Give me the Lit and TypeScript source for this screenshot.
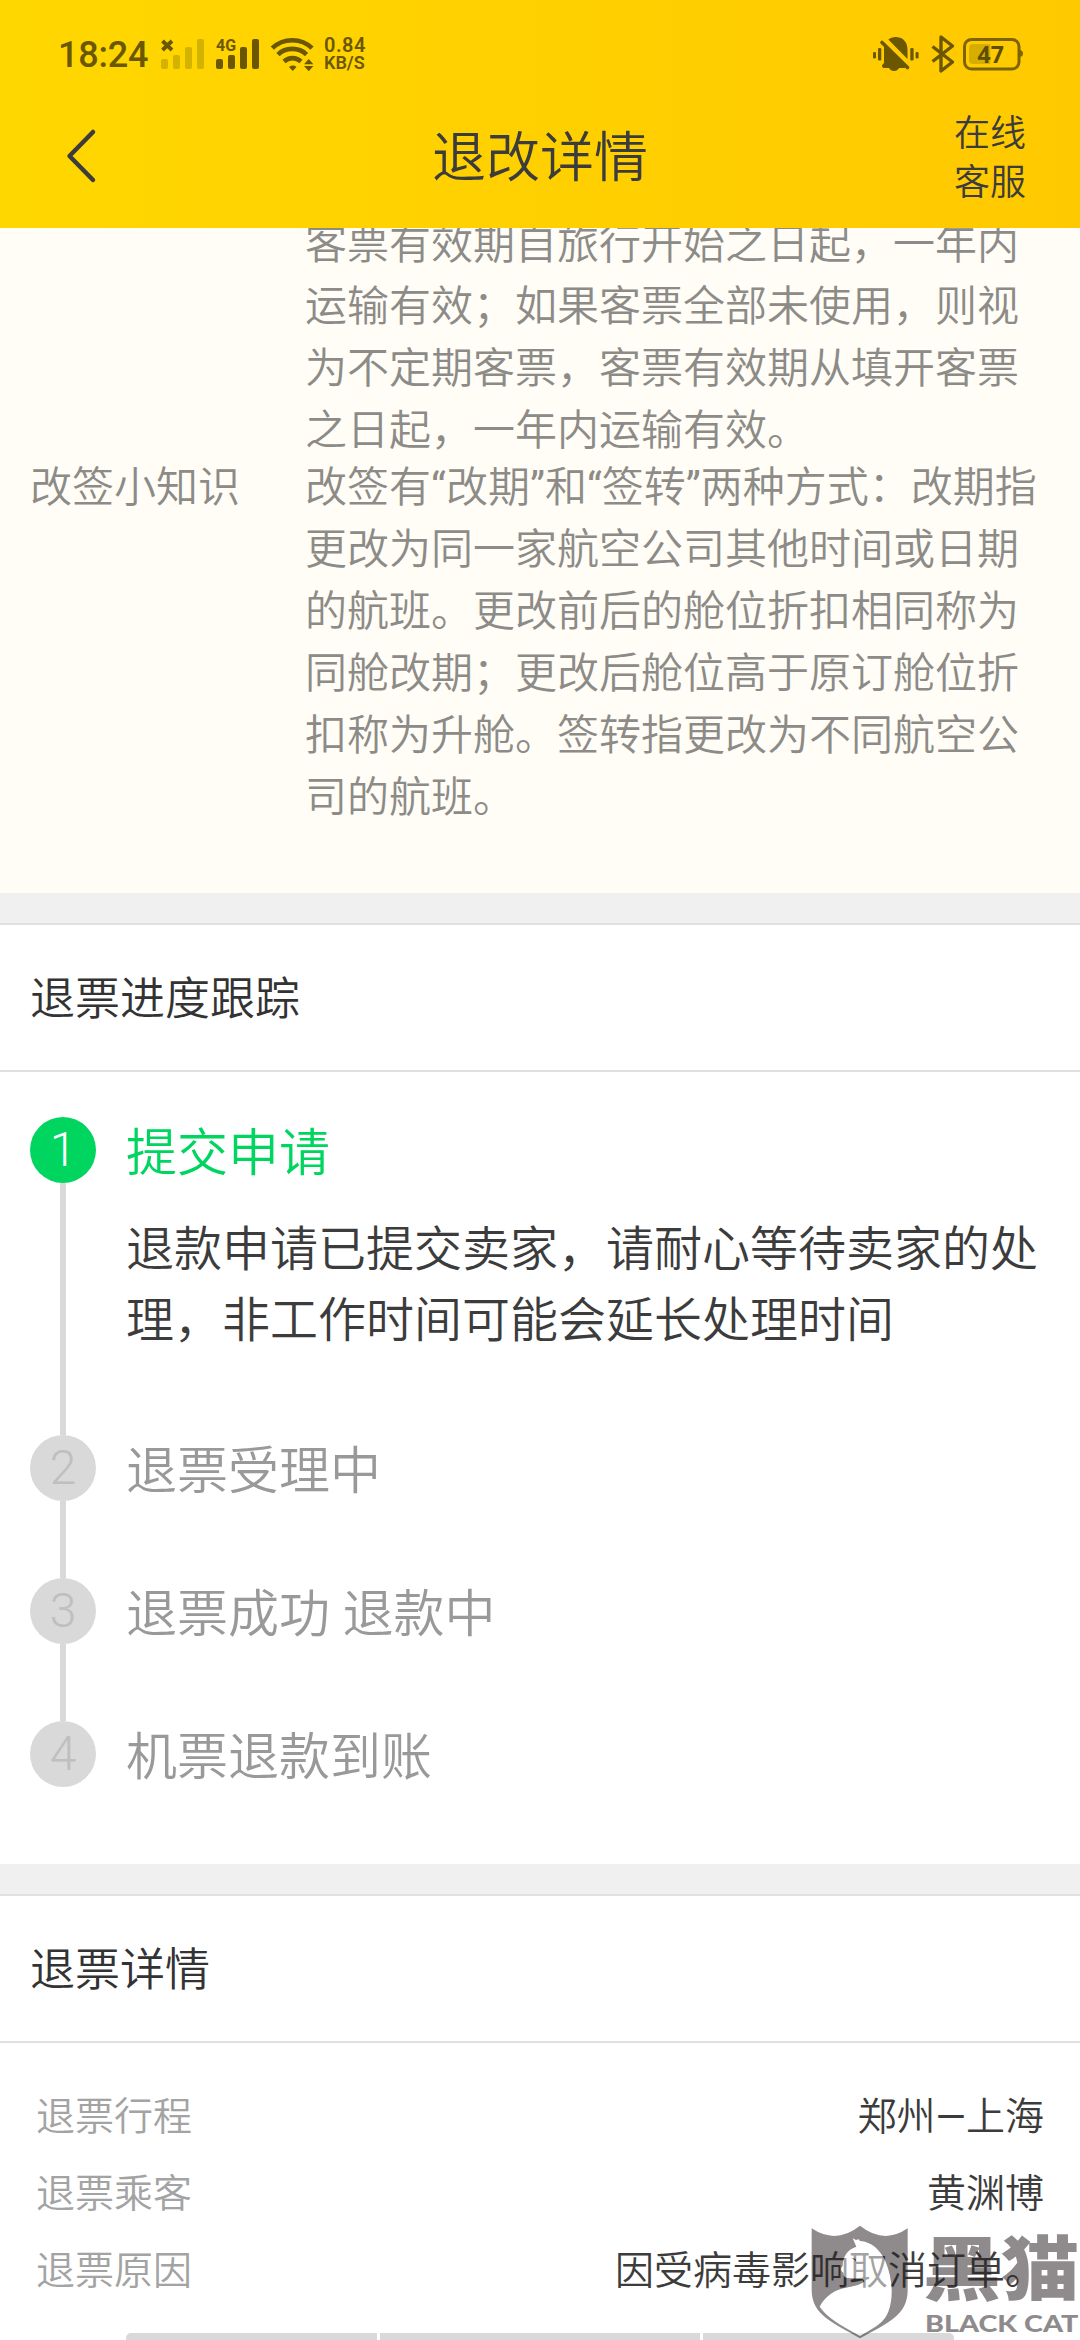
import { LitElement, html, css, nothing } from "lit";
import { customElement, property } from "lit/decorators.js";

const FONT = css`Roboto, "Noto Sans CJK SC", sans-serif`;

interface Step {
  title: string;
  note?: string;
  active?: boolean;
}

const RULES = [
  {
    label: "",
    text: "客票有效期自旅行开始之日起，一年内运输有效；如果客票全部未使用，则视为不定期客票，客票有效期从填开客票之日起，一年内运输有效。",
  },
  {
    label: "改签小知识",
    text: "改签有“改期”和“签转”两种方式：改期指更改为同一家航空公司其他时间或日期的航班。更改前后的舱位折扣相同称为同舱改期；更改后舱位高于原订舱位折扣称为升舱。签转指更改为不同航空公司的航班。",
  },
];

const STEPS: Step[] = [
  {
    title: "提交申请",
    note: "退款申请已提交卖家，请耐心等待卖家的处理，非工作时间可能会延长处理时间",
    active: true,
  },
  { title: "退票受理中" },
  { title: "退票成功 退款中" },
  { title: "机票退款到账" },
];

const DETAILS = [
  ["退票行程", "郑州—上海"],
  ["退票乘客", "黄渊博"],
  ["退票原因", "因受病毒影响取消订单。"],
];

/** Sets quotes and dashes in the regular Latin weight. */
const withLatinMarks = (text: string) =>
  text.split(/([“”—])/).map((part) => (/^[“”—]$/.test(part) ? html`<span class="latin">${part}</span>` : part));

@customElement("status-bar")
class StatusBar extends LitElement {
  static styles = css`
    :host {
      display: flex;
      justify-content: space-between;
      height: 78px;
      padding: 33px 57px 0 58px;
      box-sizing: border-box;
      color: #6b5700;
      font-family: ${FONT};
    }
    .group {
      display: flex;
      height: 42px;
    }
    .time {
      width: 102px;
      font-size: 36px;
      line-height: 45px;
      font-weight: 500;
      letter-spacing: -0.2px;
    }
    svg {
      display: block;
      flex: none;
    }
    .tag {
      font: 700 17px Roboto, sans-serif;
    }
    .rate {
      display: flex;
      flex-direction: column;
      margin-left: 10px;
      font-weight: 600;
      white-space: nowrap;
    }
    .speed {
      font-size: 20px;
      line-height: 25px;
      letter-spacing: 0.5px;
    }
    .unit {
      font-size: 18px;
      line-height: 10px;
    }
    .level {
      font: 700 23px "Noto Sans", sans-serif;
    }
  `;

  render() {
    return html`
      <div class="group">
        <div class="time">18:24</div>
        <svg width="44" height="42" viewBox="160 33 44 42">
          <g fill="#d4b200">
            <rect x="161" y="59" width="7" height="10" rx="2" />
            <rect x="173" y="55" width="7" height="14" rx="2" />
            <rect x="185" y="47" width="7" height="22" rx="2" />
            <rect x="197" y="39" width="7" height="30" rx="2" />
          </g>
          <path d="M162.500 41l9.500 9M172 41l-9.500 9" stroke="currentColor" stroke-width="3.800" />
        </svg>
        <svg width="55" height="42" viewBox="204 33 55 42" fill="currentColor">
          <rect x="216" y="59" width="7" height="10" rx="2" />
          <rect x="228" y="55" width="7" height="14" rx="2" />
          <rect x="240" y="47" width="7" height="22" rx="2" />
          <rect x="252" y="39" width="7" height="30" rx="2" />
          <text class="tag" x="216" y="51" textLength="20" lengthAdjust="spacingAndGlyphs">4G</text>
        </svg>
        <svg width="55" height="42" viewBox="259 33 55 42">
          <g fill="none" stroke="currentColor" stroke-width="4.600">
            <path d="M272.300 48.200C283 37.500 301.500 37.500 312 48.200" />
            <path d="M278 54.600C285.500 47 299 47 306.500 54.600" />
            <path d="M284 61.400C289 57 296 57 301 61.400" />
          </g>
          <path d="M289 67q4-2.800 7.500 0l-3.700 4zM304 64.200l4.700-5.200 4.700 5.200zM304 66l4.700 5.200 4.700-5.200z" fill="currentColor" />
        </svg>
        <div class="rate">
          <span class="speed">0.84</span>
          <span class="unit">KB/S</span>
        </div>
      </div>
      <div class="group">
        <svg width="50" height="42" viewBox="873 33 50 42" fill="currentColor">
          <rect x="873" y="52" width="3" height="6.500" rx="1.200" />
          <rect x="878" y="48" width="3.300" height="12.500" rx="1.200" />
          <rect x="910.300" y="48" width="3.300" height="12.500" rx="1.200" />
          <rect x="915.600" y="52" width="3" height="6.500" rx="1.200" />
          <path d="M888.300 39.500C894 35 907.500 36 907.500 50V59z" />
          <path d="M884 46L906 67.500q-1 .5-7 .5-1.500 3-5 3T889 68H883.500q-2.500-1.500-.9-3.500l1.400-1.500z" />
          <path d="M882 42.500L907.500 67.500" stroke="currentColor" stroke-width="3.600" stroke-linecap="round" />
        </svg>
        <svg width="32" height="42" viewBox="923 33 32 42">
          <path d="M932.500 46.500L952.500 62 941 71V37L952.500 46 932.500 61.500" fill="none" stroke="currentColor" stroke-width="3.400" stroke-linejoin="round" />
        </svg>
        <svg width="68" height="42" viewBox="955 33 68 42">
          <rect x="964.500" y="39.500" width="54.500" height="29.500" rx="7" fill="none" stroke="#7d6400" stroke-width="3" />
          <path d="M1020 50q3 .5 3 3.500t-3 3.500z" fill="#7d6400" />
          <path d="M973 44h17.400v20H973q-4 0-4-4V48q0-4 4-4z" fill="#d6ae00" />
          <text class="level" x="977.500" y="62.700" fill="#5e4c00" textLength="26.500">47</text>
        </svg>
      </div>
    `;
  }
}

@customElement("step-item")
class StepItem extends LitElement {
  @property({ type: Object }) step!: Step;
  @property({ type: Number }) index = 1;
  @property({ type: Boolean }) last = false;

  static styles = css`
    :host {
      display: flex;
      gap: 30px;
      font-family: ${FONT};
    }
    .rail {
      display: flex;
      flex-direction: column;
      align-items: center;
      width: 66px;
      flex: none;
    }
    .dot {
      width: 66px;
      height: 66px;
      flex: none;
      border-radius: 50%;
      background: #d9d9d9;
      color: #bfbfbf;
      font-size: 48px;
      font-weight: 300;
      line-height: 65px;
      text-align: center;
    }
    .dot.active {
      background: #00d560;
      color: #fff;
    }
    .line {
      width: 6px;
      flex: 1;
      background: #d9d9d9;
    }
    .body {
      min-height: 143px;
      padding-top: 4px;
      box-sizing: border-box;
    }
    .body.last {
      min-height: 66px;
      height: 66px;
    }
    .body.noted {
      min-height: 318px;
    }
    .title {
      font-size: 51px;
      line-height: 66px;
      color: #999;
    }
    .title.active {
      color: #00d560;
    }
    .note {
      margin-top: 27px;
      width: 920px;
      font-size: 48px;
      line-height: 71px;
      color: #3c3c3c;
    }
  `;

  render() {
    const { title, note, active } = this.step;
    return html`
      <div class="rail">
        <div class="dot ${active ? "active" : ""}">${this.index}</div>
        ${this.last ? nothing : html`<div class="line"></div>`}
      </div>
      <div class="body ${this.last ? "last" : ""} ${note ? "noted" : ""}">
        <div class="title ${active ? "active" : ""}">${title}</div>
        ${note ? html`<div class="note">${note}</div>` : nothing}
      </div>
    `;
  }
}

@customElement("brand-mark")
class BrandMark extends LitElement {
  static styles = css`
    :host {
      display: block;
      opacity: 0.52;
    }
    svg {
      display: block;
    }
    .zh {
      font: 900 210px "Noto Sans CJK SC", sans-serif;
    }
    .en {
      font: 900 69px Lato, sans-serif;
    }
  `;

  render() {
    return html`
      <svg width="270" height="117" viewBox="90 69 810 351" fill="#2a2224">
        <path d="M95 85Q168 134 240 77Q312 134 383 85V270C383 345 325 368 240 415C160 368 95 345 95 270Z" />
        <path fill="#fff" d="M218 115L228 120L236 118L240 123C275 125 302 150 318 188C336 232 342 290 325 335C312 365 298 375 240 408C180 375 140 352 119 320C130 300 150 275 190 265C220 258 238 256 251 246C256 240 250 236 238 236L203 234C192 232 190 225 190 218C181 212 182 204 188 198C188 175 198 150 229 140Z" />
        <path d="M213 173l14 3v9l-4-6z" />
        <text class="zh" x="428" y="284" textLength="470" lengthAdjust="spacingAndGlyphs">黑猫</text>
        <text class="en" x="435" y="396" textLength="460" lengthAdjust="spacingAndGlyphs">BLACK CAT</text>
      </svg>
    `;
  }
}

@customElement("app-root")
class AppRoot extends LitElement {
  static styles = css`
    :host {
      display: flex;
      flex-direction: column;
      position: relative;
      width: 1080px;
      height: 2340px;
      overflow: hidden;
      background: #fff;
      font-family: ${FONT};
      font-weight: 350;
    }
    .latin {
      font-weight: 400;
    }
    .top {
      height: 228px;
      flex: none;
      background: linear-gradient(90deg, #ffd700, #ffc900);
      color: #3c3c3c;
    }
    .nav {
      display: grid;
      grid-template-columns: 1fr auto 1fr;
      align-items: center;
      height: 156px;
      padding: 0 54px 0 64px;
    }
    .nav svg {
      display: block;
    }
    .heading {
      font-size: 54px;
      line-height: 78px;
      margin-left: -10px;
      padding-top: 6px;
    }
    .service {
      justify-self: end;
      width: 72px;
      font-size: 36px;
      line-height: 49px;
      padding-top: 6px;
    }
    .rules {
      height: 665px;
      flex: none;
      overflow: hidden;
      background: #fffdf6;
      color: #8c8b87;
      font-size: 42px;
      line-height: 62px;
    }
    .rule {
      display: grid;
      grid-template-columns: 275px 735px;
      padding-left: 30px;
      margin-top: -5px;
    }
    .rule.first {
      margin-top: -14px;
    }
    .gap {
      height: 30px;
      flex: none;
      background: #f0f0f0;
    }
    .section {
      height: 145px;
      flex: none;
      border-top: 2px solid #e0e0e0;
      border-bottom: 2px solid #e0e0e0;
      padding-left: 30px;
      font-size: 45px;
      line-height: 149px;
      color: #333;
    }
    .steps {
      height: 747px;
      flex: none;
      padding: 45px 0 0 30px;
      box-sizing: content-box;
    }
    .details {
      display: flex;
      flex-direction: column;
      padding: 36px 36px 0;
      height: 254px;
      flex: none;
    }
    .row {
      display: flex;
      justify-content: space-between;
      font-size: 39px;
      line-height: 77px;
      color: #3c3c3c;
    }
    .key {
      color: #a3a3a3;
    }
    .actions {
      display: grid;
      grid-template-columns: 251px 320px 251px;
      gap: 3px;
      height: 7px;
      overflow: hidden;
      margin: 0 126px;
      border-radius: 5px 5px 0 0;
    }
    .action {
      background: #d9d9d9;
    }
    .mark {
      position: absolute;
      right: 0;
      bottom: 0;
    }
  `;

  render() {
    return html`
      <header class="top">
        <status-bar></status-bar>
        <div class="nav">
          <svg width="34" height="56" viewBox="64 128 34 56">
            <path d="M93 132L69.500 156L93 180" fill="none" stroke="#3c3c3c" stroke-width="4.500" stroke-linecap="round" stroke-linejoin="round" />
          </svg>
          <div class="heading">退改详情</div>
          <div class="service">在线客服</div>
        </div>
      </header>
      <section class="rules">
        ${RULES.map(
          (r, i) =>
            html`<div class="rule ${i ? "" : "first"}"><div>${r.label}</div><div>${withLatinMarks(r.text)}</div></div>`
        )}
      </section>
      <div class="gap"></div>
      <div class="section">退票进度跟踪</div>
      <div class="steps">
        ${STEPS.map(
          (s, i) => html`<step-item .step=${s} .index=${i + 1} .last=${i === STEPS.length - 1}></step-item>`
        )}
      </div>
      <div class="gap"></div>
      <div class="section">退票详情</div>
      <div class="details">
        ${DETAILS.map(
          ([k, v]) => html`<div class="row"><span class="key">${k}</span><span>${withLatinMarks(v)}</span></div>`
        )}
      </div>
      <div class="actions">
        <div class="action"></div>
        <div class="action"></div>
        <div class="action"></div>
      </div>
      <brand-mark class="mark"></brand-mark>
    `;
  }
}
